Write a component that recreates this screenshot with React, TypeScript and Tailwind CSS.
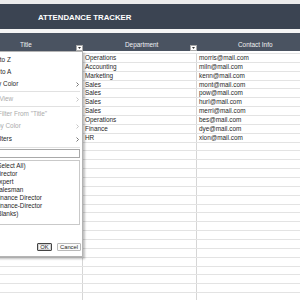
import React from 'react';

const data: [string, string][] = [
    ['Operations', 'morris@mail.com'],
    ['Accounting', 'miln@mail.com'],
    ['Marketing', 'kenn@mail.com'],
    ['Sales', 'mont@mail.com'],
    ['Sales', 'pow@mail.com'],
    ['Sales', 'hurl@mail.com'],
    ['Sales', 'merri@mail.com'],
    ['Operations', 'bes@mail.com'],
    ['Finance', 'dye@mail.com'],
    ['HR', 'xion@mail.com'],
];

const filterValues = ['(Select All)', 'Director', 'Expert', 'Salesman', 'Finance Director', 'Finance-Director', '(Blanks)'];

const DropButton = () => (
    <div className="absolute right-0 bottom-0 w-[7px] h-[6px] bg-white border border-[#a8a8a8] flex items-center justify-center">
        <svg width="3" height="2" viewBox="0 0 3 2">
            <path d="M0 0 L3 0 L1.5 2 Z" fill="#333" />
        </svg>
    </div>
);

const Chevron = ({ muted }: { muted?: boolean }) => (
    <svg width="3" height="5" viewBox="0 0 3 5">
        <path d="M0.5 0.5 L2.5 2.5 L0.5 4.5" fill="none" stroke={muted ? '#b8b8b8' : '#555'} strokeWidth="0.8" />
    </svg>
);

interface MenuItemProps {
    label: string;
    height: string;
    muted?: boolean;
    chevron?: boolean;
}

const MenuItem: React.FC<MenuItemProps> = ({ label, height, muted, chevron }) => (
    <div className={`flex items-center justify-between pl-[22px] pr-[1px] ${height}`}>
        <span className={`whitespace-nowrap leading-none ${muted ? 'text-[#ababab]' : 'text-[#1f1f1f]'}`}>{label}</span>
        {chevron && <Chevron muted={muted} />}
    </div>
);

const Separator = ({ height }: { height: string }) => (
    <div className={`flex items-center ${height}`}>
        <div className="h-px w-full bg-[#e1e1e1]" />
    </div>
);

export default function App() {
    return (
        <div className="relative w-[300px] h-[300px] overflow-hidden bg-white font-['Liberation_Sans',Arial,sans-serif] text-[6.4px]">
            {/* Top band + title */}
            <div className="h-[4px] bg-[#ebebeb]" />
            <div className="h-[25px] bg-[#3b4452] flex items-center pl-[38px] pt-[2px]">
                <span className="text-white font-bold text-[7.8px]">ATTENDANCE TRACKER</span>
            </div>
            <div className="h-[4px] bg-[#f5f5f5]" />

            {/* Column headers */}
            <div className="h-[18px] bg-[#4a5361] flex text-[#eef0f2]">
                <div className="relative w-[83px] shrink-0 pl-[20px] pt-[8px] leading-[7px]">
                    Title
                    <DropButton />
                </div>
                <div className="relative w-[114px] shrink-0 pl-[42px] pt-[8px] leading-[7px]">
                    Department
                    <DropButton />
                </div>
                <div className="flex-1 pl-[41px] pt-[8px] leading-[7px]">Contact Info</div>
            </div>
            <div className="h-[2px]" />

            {/* Rows */}
            <div className="border-t border-[#e3e3e3]">
                {Array.from({ length: 28 }).map((_, i) => (
                    <div key={i} className="flex h-[8.86px] border-b border-[#e3e3e3] text-[#1f1f1f]">
                        <div className="w-[83px] shrink-0 border-r border-[#d6d6d6]" />
                        <div className="w-[114px] shrink-0 border-r border-[#d6d6d6] pl-[2px] leading-[8px] whitespace-nowrap">
                            {data[i]?.[0]}
                        </div>
                        <div className="flex-1 pl-[2px] leading-[8px] whitespace-nowrap">{data[i]?.[1]}</div>
                    </div>
                ))}
            </div>

            {/* Filter dropdown */}
            <div className="absolute top-[51px] left-[-42px] w-[125px] bg-white border border-[#b4b4b4] shadow-[2px_2px_2px_rgba(0,0,0,0.25)] pt-[2px] pb-[5px] pr-[2px]">
                <MenuItem label="Sort A to Z" height="h-[12px]" />
                <MenuItem label="Sort Z to A" height="h-[12px]" />
                <MenuItem label="Sort by Color" height="h-[12px]" chevron />
                <Separator height="h-[3px]" />
                <MenuItem label="Sheet View" height="h-[12px]" muted chevron />
                <Separator height="h-[3px]" />
                <MenuItem label='Clear Filter From "Title"' height="h-[12px]" muted />
                <MenuItem label="Filter by Color" height="h-[13px]" muted chevron />
                <MenuItem label="Text Filters" height="h-[13px]" chevron />
                <Separator height="h-[2px]" />

                <div className="mt-[1px] ml-[14px] h-[9px] border border-[#a9a9a9] bg-white" />

                <div className="mt-[2px] ml-[14px] h-[65px] border border-[#c9c9c9] pt-px">
                    {filterValues.map(v => (
                        <div key={v} className="h-[8px] pl-[21px] leading-[8px] text-[#1f1f1f] whitespace-nowrap">{v}</div>
                    ))}
                </div>

                <div className="mt-[18px] -mr-[1px] flex justify-end gap-[5px] text-[5.8px] text-[#262626]">
                    <div className="w-[15px] h-[8px] border border-[#444] rounded-[1px] flex items-center justify-center bg-[#f7f7f7] outline outline-1 outline-[#d0d0d0] -outline-offset-2">OK</div>
                    <div className="w-[24px] h-[8px] border border-[#b9b9b9] rounded-[1px] flex items-center justify-center bg-[#fbfbfb]">Cancel</div>
                </div>
            </div>
        </div>
    );
}
